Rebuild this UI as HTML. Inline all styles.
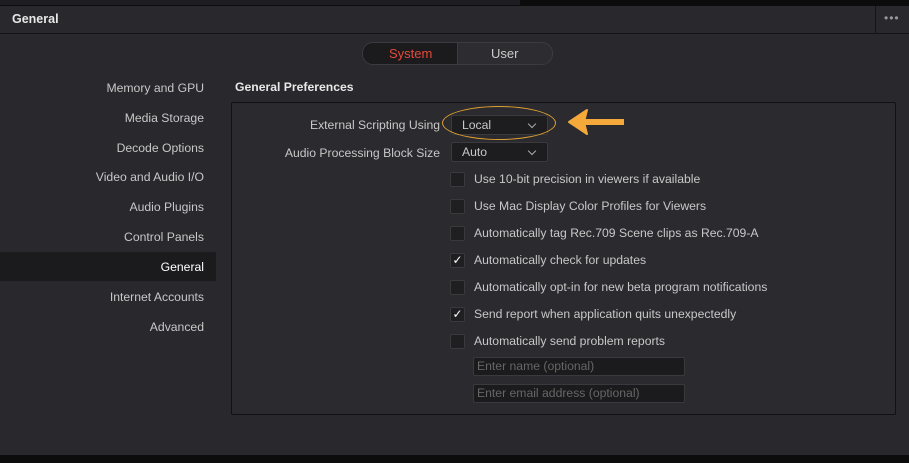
<!DOCTYPE html><html><head><style>
body{margin:0;width:909px;height:463px;background:#0c0c0d;font-family:"Liberation Sans",sans-serif;font-size:12.2px;color:#c8c8c8;position:relative;overflow:hidden}
.a{position:absolute}
.r{text-align:right;width:204px;left:0}
.cb{position:absolute;left:450px;width:13px;height:13px;background:#1f1f22;border:1px solid #3a3a3e;border-radius:2px;color:#fff;font-size:12px;line-height:13px;text-align:center}
.lb{position:absolute;left:474px}
.dd{position:absolute;left:451px;width:95px;height:18px;background:#1d1d20;border:1px solid #3a3a3e;border-radius:2px;line-height:18px;text-indent:10px}
.dd:after{content:"";position:absolute;right:12px;top:5px;width:5px;height:5px;border-right:1px solid #aaa;border-bottom:1px solid #aaa;transform:rotate(45deg)}
.in{position:absolute;left:473px;width:210px;height:17px;background:#1b1b1d;border:1px solid #3a3a3e;border-radius:2px;color:#666;line-height:17px;text-indent:3px}
</style></head><body>
<div class="a" style="left:0;top:0;width:520px;height:5px;background:#1e1e22"></div>
<div class="a" style="left:0;top:6px;width:909px;height:27px;background:#28282d;border-bottom:1px solid #141416"></div>
<div class="a" style="left:12px;top:12px;color:#e8e8e8;font-weight:bold;font-size:12.5px">General</div>
<div class="a" style="left:875px;top:6px;width:1px;height:27px;background:#141416"></div>
<div class="a" style="left:884px;top:11px;color:#999;font-size:12px;letter-spacing:1px">•••</div>
<div class="a" style="left:0;top:34px;width:909px;height:421px;background:#28282d"></div>
<div class="a" style="left:362px;top:42px;width:189px;height:21px;border:1px solid #3c3c40;border-radius:11px;background:#2c2c31;overflow:hidden">
<div class="a" style="left:0;top:0;width:94px;height:21px;background:#1b1b1e;border-right:1px solid #3c3c40"></div>
<div class="a" style="left:26px;top:3px;color:#e5493a;font-size:13px">System</div>
<div class="a" style="left:128px;top:3px;color:#ccc;font-size:13px">User</div></div>
<div class="a" style="left:0;top:252px;width:216px;height:29px;background:#1b1b1e"></div>
<div class="a r" style="top:81px">Memory and GPU</div>
<div class="a r" style="top:111px">Media Storage</div>
<div class="a r" style="top:141px">Decode Options</div>
<div class="a r" style="top:170px">Video and Audio I/O</div>
<div class="a r" style="top:200px">Audio Plugins</div>
<div class="a r" style="top:230px">Control Panels</div>
<div class="a r" style="top:260px;color:#fff">General</div>
<div class="a r" style="top:290px">Internet Accounts</div>
<div class="a r" style="top:320px">Advanced</div>
<div class="a" style="left:235px;top:80px;color:#e8e8e8;font-weight:bold">General Preferences</div>
<div class="a" style="left:231px;top:102px;width:663px;height:311px;border:1px solid #111;border-radius:2px;background:#2a2a2f"></div>
<div class="a" style="left:240px;top:118px;width:200px;text-align:right">External Scripting Using</div>
<div class="a" style="left:240px;top:146px;width:200px;text-align:right">Audio Processing Block Size</div>
<div class="dd" style="top:115px">Local</div>
<div class="dd" style="top:142px">Auto</div>
<div class="a" style="left:442px;top:106px;width:112px;height:32px;border:1.5px solid #e0a030;border-radius:50%"></div>
<svg class="a" style="left:566px;top:108px" width="62" height="30"><path d="M58 14H18" stroke="#f4a93a" stroke-width="6"/><path d="M3 14L21 2L18 14L21 26Z" fill="#f4a93a" stroke="#f4a93a" stroke-width="2" stroke-linejoin="round"/></svg>
<div class="cb" style="top:172px"></div><div class="lb" style="top:172px">Use 10-bit precision in viewers if available</div>
<div class="cb" style="top:199px"></div><div class="lb" style="top:199px">Use Mac Display Color Profiles for Viewers</div>
<div class="cb" style="top:226px"></div><div class="lb" style="top:226px">Automatically tag Rec.709 Scene clips as Rec.709-A</div>
<div class="cb" style="top:253px">✓</div><div class="lb" style="top:253px">Automatically check for updates</div>
<div class="cb" style="top:280px"></div><div class="lb" style="top:280px">Automatically opt-in for new beta program notifications</div>
<div class="cb" style="top:307px">✓</div><div class="lb" style="top:307px">Send report when application quits unexpectedly</div>
<div class="cb" style="top:334px"></div><div class="lb" style="top:334px">Automatically send problem reports</div>
<div class="in" style="top:357px">Enter name (optional)</div>
<div class="in" style="top:384px">Enter email address (optional)</div>
</body></html>
